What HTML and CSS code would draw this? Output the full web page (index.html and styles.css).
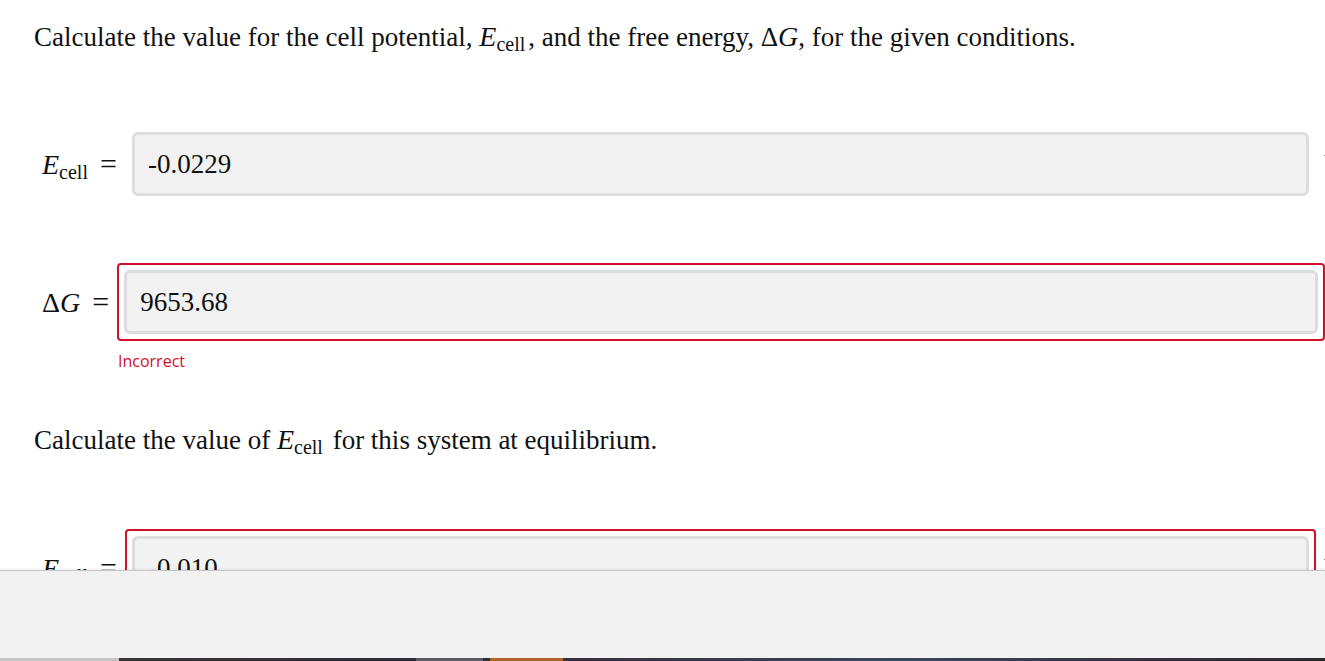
FILE: index.html
```html
<!DOCTYPE html>
<html lang="en">
<head>
    <meta charset="UTF-8">
    <title>Cell potential question</title>
    <link rel="stylesheet" href="styles.css">
</head>
<body>

    <div class="pergunta">
        <p class="enunciado">Calculate the value for the cell potential, <span class="mat"><i>E</i><sub>cell</sub></span>, and the free energy, <span class="mat">&Delta;<i>G</i></span>, for the given conditions.</p>

        <div class="linha linha-1">
            <span class="rotulo"><i>E</i><sub>cell</sub><span class="igual">=</span></span>
            <div class="campo">
                <div class="entrada">-0.0229</div>
            </div>
            <span class="unidade">V</span>
        </div>

        <div class="linha linha-2">
            <span class="rotulo">&Delta;<i>G</i><span class="igual">=</span></span>
            <div class="campo errado">
                <div class="entrada">9653.68</div>
            </div>
            <span class="unidade">kJ/mol</span>
        </div>
        <p class="aviso">Incorrect</p>

        <p class="enunciado enunciado-2">Calculate the value of <span class="mat"><i>E</i><sub>cell</sub></span> for this system at equilibrium.</p>

        <div class="linha linha-3">
            <span class="rotulo"><i>E</i><sub>cell</sub><span class="igual">=</span></span>
            <div class="campo errado">
                <div class="entrada">-0.010</div>
            </div>
            <span class="unidade">V</span>
        </div>
    </div>

    <!-- barra fixa no rodape -->
    <div class="rodape"></div>

</body>
</html>
```

FILE: styles.css
```css
/* Pagina */
body {
    margin: 0;
    background-color: #ffffff;
    color: #111111;
    font-family: "Liberation Serif", "Times New Roman", serif;
    overflow: hidden;
}

.pergunta {
    padding: 0 0 0 34px;
    width: 1400px;
}

.enunciado {
    margin: 19px 0 0;
    font-size: 27px;
    line-height: 36px;
}

.enunciado-2 {
    margin-top: 50px;
}

.mat i {
    font-size: 28px;
}

.mat sub {
    font-size: 20px;
    vertical-align: -5px;
    line-height: 0;
    margin-right: 3px;
}

/* Linhas com campo */
.linha {
    display: flex;
    align-items: center;
    width: 1322px;
    padding-left: 8px;
    gap: 8px;
}

.linha-1 {
    margin-top: 70px;
}

.linha-2 {
    margin-top: 60px;
    width: 1331px;
}

.linha-3 {
    margin-top: 71px;
}

.rotulo {
    font-size: 28px;
    white-space: nowrap;
}

.rotulo sub {
    font-size: 20px;
    vertical-align: -5px;
    line-height: 0;
}

.igual {
    margin-left: 12px;
    font-size: 30px;
}

.campo {
    flex: 1;
    padding: 5px;
    border: 2px solid transparent;
    border-radius: 4px;
}

.campo.errado {
    border-color: #d0112b;
}

.entrada {
    height: 58px;
    line-height: 58px;
    padding: 0 13px;
    background-color: #f2f2f2;
    border: 3px solid #dddddd;
    border-radius: 6px;
    font-size: 27px;
}

.unidade {
    flex: 0 0 40px;
    min-width: 0;
    font-size: 26px;
    white-space: nowrap;
}

.aviso {
    margin: 9px 0 0 84px;
    font-family: "Open Sans", "Liberation Sans", sans-serif;
    font-size: 16px;
    color: #d0112b;
}

/* Rodape fixo sobre o conteudo */
.rodape {
    position: fixed;
    left: 0;
    right: 0;
    bottom: 0;
    height: 90px;
    background-color: #f2f2f2;
    border-top: 1px solid #c6c6c6;
    box-shadow: 0 -1px 2px rgba(0, 0, 0, 0.08);
}

.rodape::after {
    content: "";
    position: absolute;
    left: 0;
    right: 0;
    bottom: 0;
    height: 3px;
    background: linear-gradient(to right,
        #c4c4c4 0, #c4c4c4 119px,
        #3a3636 119px, #2c2a3a 416px,
        #5c5a66 416px, #5c5a66 483px,
        #2e2e32 483px, #2e2e32 490px,
        #b0642a 490px, #b0642a 563px,
        #3a2e42 563px, #36485a 900px, #3a3044 1150px, #2a2a2e 1325px);
}
```
